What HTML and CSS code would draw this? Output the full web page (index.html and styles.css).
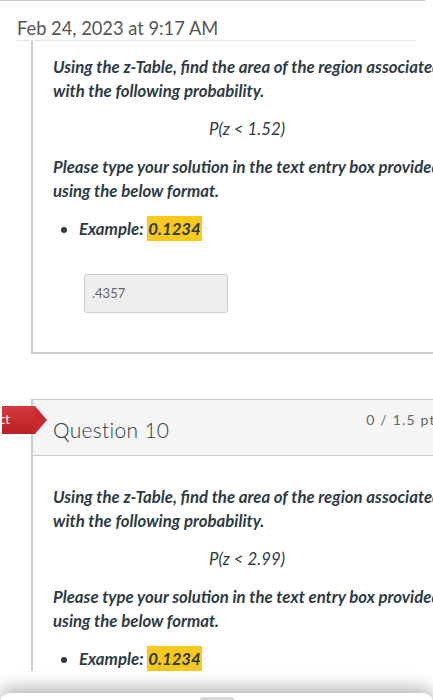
FILE: index.html
```html
<!DOCTYPE html>
<html>
<head>
<meta charset="utf-8">
<link rel="stylesheet" href="styles.css">
</head>
<body>
<div class="page">
  <div class="topline"></div>
  <div class="date">Feb 24, 2023 at 9:17 AM</div>
  <div class="card first">
    <div class="body">
      <p class="q">Using the z-Table, find the area of the region associated<br>with the following probability.</p>
      <p class="prob">P(z &lt; 1.52)</p>
      <p class="q">Please type your solution in the text entry box provided<br>using the below format.</p>
      <ul class="ex"><li>Example: <span class="hl">0.1234</span></li></ul>
      <div class="answer">.4357</div>
    </div>
  </div>
  <div class="card second">
    <div class="flag">ct</div>
    <div class="head">
      <span class="title">Question 10</span>
      <span class="pts">0 / 1.5 pts</span>
    </div>
    <div class="body">
      <p class="q">Using the z-Table, find the area of the region associated<br>with the following probability.</p>
      <p class="prob">P(z &lt; 2.99)</p>
      <p class="q">Please type your solution in the text entry box provided<br>using the below format.</p>
      <ul class="ex"><li>Example: <span class="hl">0.1234</span></li></ul>
    </div>
  </div>
</div>
<div class="sheet"><div class="handle"></div></div>
</body>
</html>
```

FILE: styles.css
```css
html, body {
  margin: 0;
  padding: 0;
  background: #fff;
  overflow: hidden;
  height: 700px;
}
body {
  font-family: Lato, "Liberation Sans", sans-serif;
  color: #2d3b45;
  position: relative;
}
.page {
  width: 520px;
}
.topline {
  width: 425px;
  height: 1px;
  background: #c8c8c8;
}
.date {
  margin-left: 17px;
  width: 398px;
  font-size: 18.3px;
  color: #555;
  line-height: 22px;
  padding-top: 16px;
  padding-bottom: 1px;
  border-bottom: 1px solid #e6e6e6;
}
.card {
  margin-left: 31px;
  border-left: 2px solid #c7cdd1;
  position: relative;
}
.card.first {
  border-bottom: 2px solid #c7cdd1;
  height: 311px;
}
.card.second {
  margin-top: 45px;
  border-top: 1px solid #c7cdd1;
}
.body {
  padding: 14px 0 0 20px;
}
.second .body {
  padding-top: 29px;
}
.q {
  margin: 0 0 14px;
  font-size: 16.8px;
  line-height: 24px;
  font-weight: bold;
  font-style: italic;
  white-space: nowrap;
}
.prob {
  margin: 0 0 14px;
  font-size: 16.8px;
  line-height: 24px;
  font-style: italic;
  text-align: center;
  width: 388px;
}
.ex {
  margin: 0;
  padding-left: 26px;
  font-size: 16.8px;
  line-height: 24px;
  font-weight: bold;
  font-style: italic;
}
.hl {
  background: #f8c81c;
  padding: 2px 1px;
}
.answer {
  margin: 33px 0 0 31px;
  width: 135px;
  height: 37px;
  background: #eeeeee;
  border: 1px solid #cfcfcf;
  border-radius: 3px;
  font-size: 13px;
  color: #666;
  line-height: 37px;
  padding-left: 7px;
}
.head {
  background: #f5f5f5;
  height: 55px;
  border-bottom: 1px solid #c7cdd1;
  display: flex;
  align-items: flex-start;
  justify-content: space-between;
  width: 390px;
  padding-left: 20px;
}
.title {
  font-size: 21px;
  color: #2d3b45;
  margin-top: 17px;
  font-weight: 300;
  letter-spacing: 0.3px;
}
.pts {
  font-size: 14px;
  color: #666;
  margin-top: 11px;
  letter-spacing: 1.2px;
  white-space: nowrap;
}
.flag {
  position: absolute;
  left: -31px;
  top: 6px;
  width: 33px;
  height: 28px;
  background: linear-gradient(#d63a3e, #b91e23);
  color: #fff;
  font-size: 13px;
  line-height: 26px;
  text-indent: -3px;
}
.flag::after {
  content: "";
  position: absolute;
  right: -12px;
  top: 0;
  border-top: 14px solid transparent;
  border-bottom: 14px solid transparent;
  border-left: 12px solid #c72b30;
}
.sheet {
  position: absolute;
  left: 0;
  right: 0;
  top: 693px;
  height: 30px;
  background: #fff;
  border-radius: 10px 10px 0 0;
  box-shadow: 0 -6px 16px rgba(0,0,0,0.28);
}
.handle {
  width: 34px;
  height: 5px;
  margin: 4px auto 0;
  background: #d6d6d6;
  border-radius: 3px;
}
```
